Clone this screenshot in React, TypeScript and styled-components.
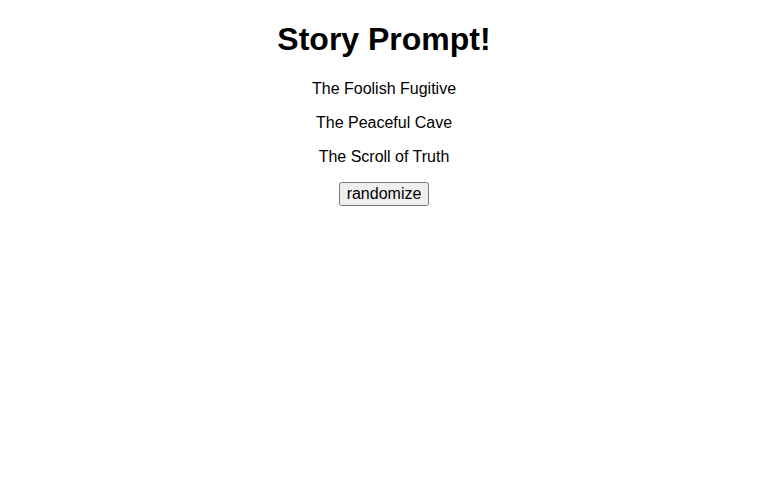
import React, { useState } from 'react'
import styled, { createGlobalStyle } from 'styled-components'

// ================================================================================================

const heroes = ['The Foolish Fugitive', 'The Brave Knight', 'The Lonely Wizard']
const places = ['The Peaceful Cave', 'The Dark Forest', 'The Sunken City']
const items = ['The Scroll of Truth', 'The Silver Key', 'The Broken Crown']

const pick = (list: string[]) => list[Math.floor(Math.random() * list.length)]

// ================================================================================================

const GlobalStyle = createGlobalStyle`
  body {
    margin: 0;
    background: #fff;
    color: #000;
    font-family: "Liberation Sans", Arial, sans-serif;
  }
`

const Page = styled.div`
  text-align: center;
`

const Title = styled.h1`
  font-size: 32px;
  font-weight: bold;
  margin: 21px 0 22px;
`

const Line = styled.p`
  font-size: 16px;
  margin: 16px 0;
`

const RandomBtn = styled.button`
  font-family: "Liberation Sans", Arial, sans-serif;
  font-size: 16px;
  padding: 1px 6px;
`

// ================================================================================================

const App = () => {
  const [prompt, setPrompt] = useState({
    hero: heroes[0],
    place: places[0],
    item: items[0],
  })

  return (
    <>
      <GlobalStyle />
      <Page>
        <Title>Story Prompt!</Title>
        <Line>{prompt.hero}</Line>
        <Line>{prompt.place}</Line>
        <Line>{prompt.item}</Line>
        <RandomBtn
          onClick={() => setPrompt({ hero: pick(heroes), place: pick(places), item: pick(items) })}
        >
          randomize
        </RandomBtn>
      </Page>
    </>
  )
}

// ================================================================================================

export default App
